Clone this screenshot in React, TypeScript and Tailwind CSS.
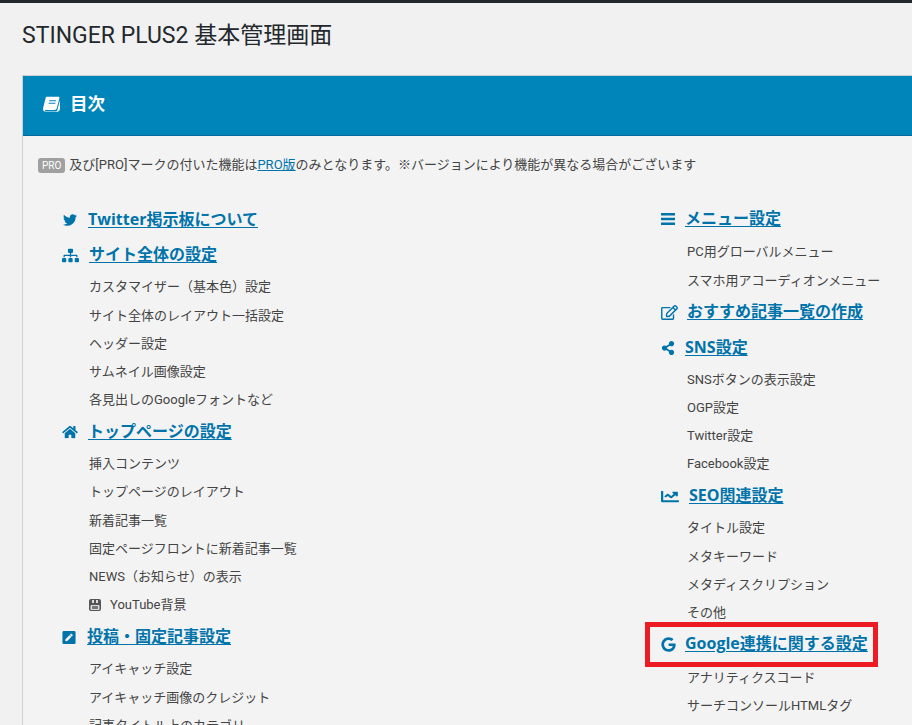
import { FaTwitter, FaSitemap, FaHome, FaPenSquare, FaRegEdit, FaShareAlt, FaChartLine, FaGoogle } from 'react-icons/fa';
import type { ReactNode } from 'react';
import clsx from 'clsx';

type Row = { title?: string; icon?: ReactNode; gap?: number; label?: string; yt?: boolean; after?: number };

function BookIcon() {
  return (
    <svg viewBox="0 0 20 18" className="w-[17px] h-[16px]" fill="#fff">
      <path d="M4.5 0.5H18c1 0 1.6.8 1.3 1.8L16.2 14c-.4 1.5-1.3 2-2.6 2H3.4c-1 0-1.4.6-1 1.1.2.3.6.4 1.2.4h11.6c.8 0 1.3-.3 1.6-1.1L20 4.5v9.8c0 1.800-1 3.200-3 3.700H3.200C1.200 18 0 16.500 0 14.800c0-.6.1-1.100.3-1.700L3 2.300C3.300 1.200 3.700.5 4.500.5z" />
      <path d="M7.500 4.500h8l-.3 1.200h-8zM6.800 7.500h8l-.3 1.200h-8z" fill="#0085ba" />
    </svg>
  );
}

function BarsIcon() {
  return (
    <svg viewBox="0 0 14 12" className="w-[14px] h-[12px]" fill="currentColor">
      <rect x="0" y="0" width="14" height="2.500" />
      <rect x="0" y="4.750" width="14" height="2.500" />
      <rect x="0" y="9.500" width="14" height="2.500" />
    </svg>
  );
}

function YtIcon() {
  return (
    <svg viewBox="0 0 12 12" className="w-[12px] h-[12px]">
      <rect x="0" y="0" width="12" height="12" rx="2" fill="#555" />
      <rect x="3" y="1" width="2" height="3" fill="#ddd" />
      <rect x="7" y="1" width="2" height="3" fill="#ddd" />
      <rect x="1.500" y="6" width="9" height="5" rx="1" fill="#ddd" />
      <rect x="3" y="7" width="6" height="3" fill="#777" />
    </svg>
  );
}

const leftRows: Row[] = [
  { title: 'Twitter掲示板について', icon: <FaTwitter className="w-[16px] h-[14px]" />, gap: 26, after: 2 },
  { title: 'サイト全体の設定', icon: <FaSitemap className="w-[17px] h-[15px]" />, gap: 27 },
  { label: 'カスタマイザー（基本色）設定' },
  { label: 'サイト全体のレイアウト一括設定' },
  { label: 'ヘッダー設定' },
  { label: 'サムネイル画像設定' },
  { label: '各見出しのGoogleフォントなど' },
  { title: 'トップページの設定', icon: <FaHome className="w-[16px] h-[14px]" />, gap: 26 },
  { label: '挿入コンテンツ' },
  { label: 'トップページのレイアウト' },
  { label: '新着記事一覧' },
  { label: '固定ページフロントに新着記事一覧' },
  { label: 'NEWS（お知らせ）の表示' },
  { label: 'YouTube背景', yt: true },
  { title: '投稿・固定記事設定', icon: <FaPenSquare className="w-[14px] h-[15px]" />, gap: 25 },
  { label: 'アイキャッチ設定' },
  { label: 'アイキャッチ画像のクレジット' },
  { label: '記事タイトル上のカテゴリ' },
];

const rightRows: Row[] = [
  { title: 'メニュー設定', icon: <BarsIcon />, gap: 24, after: 1 },
  { label: 'PC用グローバルメニュー' },
  { label: 'スマホ用アコーディオンメニュー' },
  { title: 'おすすめ記事一覧の作成', icon: <FaRegEdit className="w-[17px] h-[15px]" />, gap: 26, after: 3 },
  { title: 'SNS設定', icon: <FaShareAlt className="w-[14px] h-[14px]" />, gap: 24, after: -1 },
  { label: 'SNSボタンの表示設定' },
  { label: 'OGP設定' },
  { label: 'Twitter設定' },
  { label: 'Facebook設定' },
  { title: 'SEO関連設定', icon: <FaChartLine preserveAspectRatio="none" className="w-[18px] h-[15px]" />, gap: 28 },
  { label: 'タイトル設定' },
  { label: 'メタキーワード' },
  { label: 'メタディスクリプション' },
  { label: 'その他' },
];

function Heading({ row }: { row: Row }) {
  return (
    <div
      className="flex items-center h-[30px] mt-[3px] text-[#0073aa] whitespace-nowrap"
      style={{ marginBottom: 3 + (row.after ?? 0) }}
    >
      <span className="flex items-center" style={{ width: row.gap }}>{row.icon}</span>
      <a href="#" className="mb-[2px] font-['Open_Sans','Noto_Sans_CJK_JP',sans-serif] text-[16px] font-bold underline underline-offset-2 leading-none">{row.title}</a>
    </div>
  );
}

function Item({ row, right }: { row: Row; right?: boolean }) {
  return (
    <div className={clsx('flex items-center h-[28.2px] text-[13px] text-[#444] whitespace-nowrap', right ? 'pl-[26px]' : 'pl-[27px]')}>
      {row.yt && <span className="mr-[9px] flex items-center"><YtIcon /></span>}
      {row.label}
    </div>
  );
}

function Rows({ rows, right }: { rows: Row[]; right?: boolean }) {
  return (
    <>
      {rows.map((r, i) => (r.title ? <Heading key={i} row={r} /> : <Item key={i} row={r} right={right} />))}
    </>
  );
}

export default function App() {
  return (
    <div
      className="h-[725px] w-[912px] overflow-hidden bg-[#f1f1f1]"
      style={{ fontFamily: 'Roboto, "Noto Sans CJK JP", sans-serif' }}
    >
      <div className="h-[3px] bg-[#23282d]" />
      <div className="pl-[22px]">
        <h1 className="h-[72px] pt-[16px] text-[23px] leading-[34px] text-[#23282d]">STINGER PLUS2 基本管理画面</h1>
        <div className="border-l border-t border-[#ccd0d4] bg-[#f3f3f3]">
          <div className="flex items-center h-[60px] pl-[20px] pb-[3px] bg-[#0085ba] border-b border-[#006799] text-white">
            <BookIcon />
            <span className="ml-[10px] text-[17.5px] font-bold">目次</span>
          </div>
          <p className="flex items-center pl-[15px] mt-[19px] h-[20px] text-[13px] text-[#444] whitespace-nowrap">
            <span className="mr-[4px] bg-[#a0a0a0] text-white text-[10px] leading-[15px] px-[4px] rounded-[3px]">PRO</span>
            及び[PRO]マークの付いた機能は
            <a href="#" className="text-[#0073aa] underline">PRO版</a>
            のみとなります。※バージョンにより機能が異なる場合がございます
          </p>
          <div className="flex mt-[26px]">
            <div className="w-[638px] pl-[39px] pt-[1px]">
              <Rows rows={leftRows} />
            </div>
            <div>
              <Rows rows={rightRows} right />
              <div className="w-[233px] -ml-[16px] border-[5px] border-[#ed1c24] h-[45px] -mt-[5px] -mb-[3px] pl-[11px] flex items-center text-[#0073aa]">
                <span className="flex items-center w-[24px]"><FaGoogle className="w-[15px] h-[15px]" /></span>
                <a href="#" className="mb-[2px] font-['Open_Sans','Noto_Sans_CJK_JP',sans-serif] text-[16px] font-bold underline underline-offset-2 leading-none whitespace-nowrap">Google連携に関する設定</a>
              </div>
              <Item row={{ label: 'アナリティクスコード' }} right />
              <Item row={{ label: 'サーチコンソールHTMLタグ' }} right />
            </div>
          </div>
        </div>
      </div>
    </div>
  );
}
